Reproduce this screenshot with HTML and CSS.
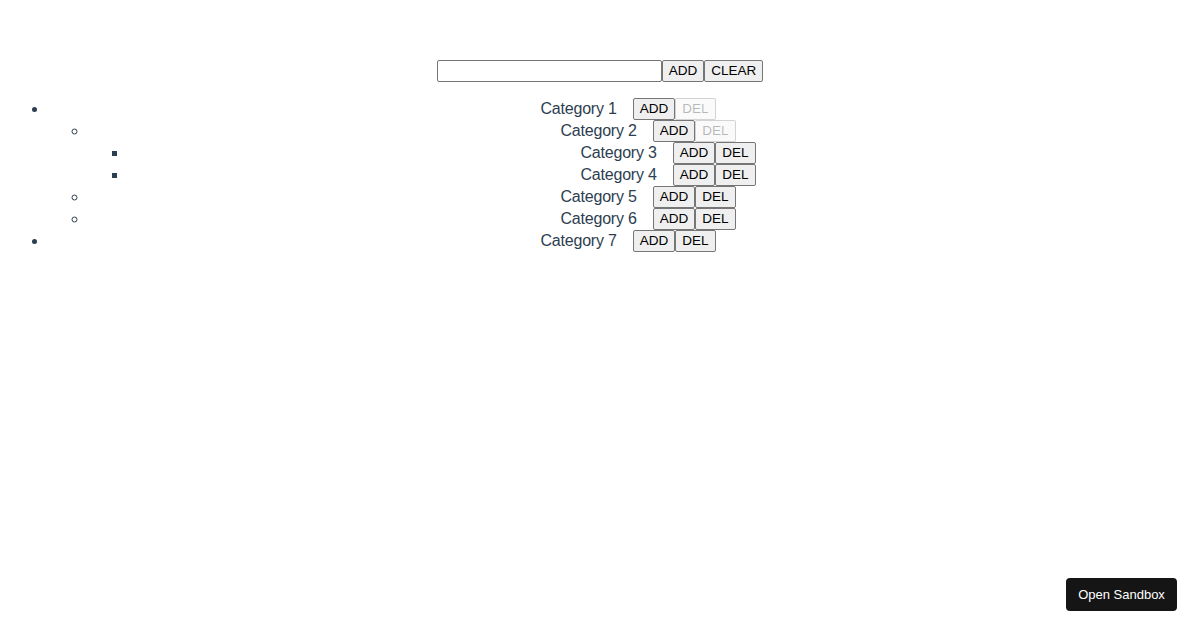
FILE: index.html
```html
<!DOCTYPE html>
<html lang="en">
<head>
<meta charset="utf-8">
<title>Category tree</title>
<link rel="stylesheet" href="styles.css">
</head>
<body>
<div id="app">
  <div class="toolbar"><input type="text" class="new-input"><button class="btn">ADD</button><button class="btn">CLEAR</button></div>
  <ul class="tree">
    <li><span class="label">Category 1</span><button class="btn">ADD</button><button class="btn" disabled>DEL</button>
      <ul class="tree">
        <li><span class="label">Category 2</span><button class="btn">ADD</button><button class="btn" disabled>DEL</button>
          <ul class="tree">
            <li><span class="label">Category 3</span><button class="btn">ADD</button><button class="btn">DEL</button></li>
            <li><span class="label">Category 4</span><button class="btn">ADD</button><button class="btn">DEL</button></li>
          </ul>
        </li>
        <li><span class="label">Category 5</span><button class="btn">ADD</button><button class="btn">DEL</button></li>
        <li><span class="label">Category 6</span><button class="btn">ADD</button><button class="btn">DEL</button></li>
      </ul>
    </li>
    <li><span class="label">Category 7</span><button class="btn">ADD</button><button class="btn">DEL</button></li>
  </ul>
</div>
<a class="sandbox-btn" href="#">Open Sandbox</a>
</body>
</html>
```
FILE: styles.css
```css
body {
  margin: 0 8px 8px;
  background: #fff;
}

#app {
  font-family: "Liberation Sans", Arial, sans-serif;
  text-align: center;
  color: #2c3e50;
  padding-top: 60px;
  font-size: 16px;
}

.toolbar {
  height: 22px;
  line-height: 22px;
}

.new-input {
  font: 13.333px "Liberation Sans", Arial, sans-serif;
  width: 225px;
  height: 22px;
  box-sizing: border-box;
  border: 1px solid #767676;
  border-radius: 2px;
  padding: 1px 2px;
  margin: 0;
  vertical-align: top;
}

.btn {
  font: 13.5px "Liberation Sans", Arial, sans-serif;
  color: #000;
  background: #efefef;
  border: 1px solid #767676;
  border-radius: 2px;
  padding: 1px 6px 2px;
  margin: 0;
  height: 22px;
  box-sizing: border-box;
  vertical-align: top;
}

.btn:disabled {
  color: rgba(16, 16, 16, 0.3);
  background: rgba(239, 239, 239, 0.3);
  border-color: rgba(118, 118, 118, 0.3);
}

.tree {
  padding-left: 40px;
}

.tree .tree {
  margin: 0;
}

.tree > li {
  line-height: 22px;
}

.label {
  margin: 0 16px;
  letter-spacing: -0.2px;
}

.sandbox-btn {
  position: fixed;
  right: 23px;
  bottom: 19px;
  width: 111px;
  height: 33px;
  box-sizing: border-box;
  display: flex;
  align-items: center;
  justify-content: center;
  background: #151515;
  color: #fff;
  border-radius: 4px;
  font: 13px "Liberation Sans", Arial, sans-serif;
  text-decoration: none;
}
```
